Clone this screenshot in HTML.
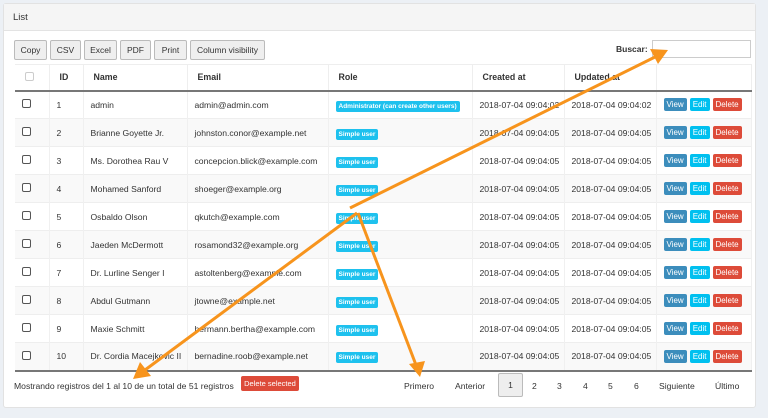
<!DOCTYPE html>
<html><head><meta charset="utf-8"><style>
*{box-sizing:border-box;margin:0;padding:0}
body{width:768px;height:418px;background:#ecf0f5;font-family:"Liberation Sans",sans-serif;font-size:8.6px;color:#333;position:relative;overflow:hidden}
.card{position:absolute;left:3px;top:3px;width:753px;height:405px;background:#fff;border-radius:3px;border:1px solid #e2e2e2}
.hd{height:27px;background:#f5f5f5;border-bottom:1px solid #e3e3e3;padding:8px 9px;font-size:9.5px}
.btn{position:absolute;top:36px;height:20px;border:1px solid #bbb;background:#efefef;font-size:8.5px;line-height:18px;text-align:center;border-radius:2px}
table{position:absolute;left:11px;top:60px;width:736px;border-collapse:collapse;table-layout:fixed}
th{height:26px;border-bottom:2px solid #777;border-right:1px solid #eee;text-align:left;padding-left:10px;font-weight:bold;font-size:8.8px;border-top:1px solid #eee}
td{height:28px;border-top:1px solid #eee;border-right:1px solid #f0f0f0;padding-left:7px;white-space:nowrap;overflow:hidden}
tr:nth-child(odd) td{background:#f9f9f9}
.cb{display:inline-block;width:9px;height:9px;border:1px solid #555;border-radius:2px;background:#fff}
.lbl{background:#1ec1ee;color:#fff;font-size:6.5px;font-weight:bold;padding:2px 3px;border-radius:2px}
.a{display:inline-block;color:#fff;font-size:8px;height:13px;line-height:13px;padding:0 3px;border-radius:2px;margin-right:3px}
.v{background:#3c8dbc}.e{background:#00c0ef}.d{background:#dd4b39}
.foot{position:absolute;top:377px;font-size:8.6px}
</style></head><body>
<div class="card"><div class="hd">List</div>
<div class="btn" style="left:10px;width:33px">Copy</div>
<div class="btn" style="left:46px;width:31px">CSV</div>
<div class="btn" style="left:80px;width:33px">Excel</div>
<div class="btn" style="left:116px;width:31px">PDF</div>
<div class="btn" style="left:150px;width:33px">Print</div>
<div class="btn" style="left:186px;width:75px">Column visibility</div>
<div style="position:absolute;left:612px;top:40px;font-weight:bold;font-size:8.5px">Buscar:</div>
<div style="position:absolute;left:648px;top:36px;width:99px;height:18px;border:1px solid #ccc"></div>
<table>
<colgroup><col style="width:34px"><col style="width:34px"><col style="width:104px"><col style="width:141px"><col style="width:144px"><col style="width:92px"><col style="width:92px"><col style="width:95px"></colgroup>
<tr><th><span class="cb" style="border-color:#ccc"></span></th><th>ID</th><th>Name</th><th>Email</th><th>Role</th><th>Created at</th><th>Updated at</th><th></th></tr>
<tr><td><span class="cb"></span></td><td>1</td><td>admin</td><td>admin@admin.com</td><td><span class="lbl">Administrator (can create other users)</span></td><td>2018-07-04 09:04:02</td><td>2018-07-04 09:04:02</td><td><span class="a v">View</span><span class="a e">Edit</span><span class="a d">Delete</span></td></tr>
<tr><td><span class="cb"></span></td><td>2</td><td>Brianne Goyette Jr.</td><td>johnston.conor@example.net</td><td><span class="lbl">Simple user</span></td><td>2018-07-04 09:04:05</td><td>2018-07-04 09:04:05</td><td><span class="a v">View</span><span class="a e">Edit</span><span class="a d">Delete</span></td></tr>
<tr><td><span class="cb"></span></td><td>3</td><td>Ms. Dorothea Rau V</td><td>concepcion.blick@example.com</td><td><span class="lbl">Simple user</span></td><td>2018-07-04 09:04:05</td><td>2018-07-04 09:04:05</td><td><span class="a v">View</span><span class="a e">Edit</span><span class="a d">Delete</span></td></tr>
<tr><td><span class="cb"></span></td><td>4</td><td>Mohamed Sanford</td><td>shoeger@example.org</td><td><span class="lbl">Simple user</span></td><td>2018-07-04 09:04:05</td><td>2018-07-04 09:04:05</td><td><span class="a v">View</span><span class="a e">Edit</span><span class="a d">Delete</span></td></tr>
<tr><td><span class="cb"></span></td><td>5</td><td>Osbaldo Olson</td><td>qkutch@example.com</td><td><span class="lbl">Simple user</span></td><td>2018-07-04 09:04:05</td><td>2018-07-04 09:04:05</td><td><span class="a v">View</span><span class="a e">Edit</span><span class="a d">Delete</span></td></tr>
<tr><td><span class="cb"></span></td><td>6</td><td>Jaeden McDermott</td><td>rosamond32@example.org</td><td><span class="lbl">Simple user</span></td><td>2018-07-04 09:04:05</td><td>2018-07-04 09:04:05</td><td><span class="a v">View</span><span class="a e">Edit</span><span class="a d">Delete</span></td></tr>
<tr><td><span class="cb"></span></td><td>7</td><td>Dr. Lurline Senger I</td><td>astoltenberg@example.com</td><td><span class="lbl">Simple user</span></td><td>2018-07-04 09:04:05</td><td>2018-07-04 09:04:05</td><td><span class="a v">View</span><span class="a e">Edit</span><span class="a d">Delete</span></td></tr>
<tr><td><span class="cb"></span></td><td>8</td><td>Abdul Gutmann</td><td>jtowne@example.net</td><td><span class="lbl">Simple user</span></td><td>2018-07-04 09:04:05</td><td>2018-07-04 09:04:05</td><td><span class="a v">View</span><span class="a e">Edit</span><span class="a d">Delete</span></td></tr>
<tr><td><span class="cb"></span></td><td>9</td><td>Maxie Schmitt</td><td>hermann.bertha@example.com</td><td><span class="lbl">Simple user</span></td><td>2018-07-04 09:04:05</td><td>2018-07-04 09:04:05</td><td><span class="a v">View</span><span class="a e">Edit</span><span class="a d">Delete</span></td></tr>
<tr><td style="border-bottom:2px solid #777"><span class="cb"></span></td><td style="border-bottom:2px solid #777">10</td><td style="border-bottom:2px solid #777">Dr. Cordia Macejkovic II</td><td style="border-bottom:2px solid #777">bernadine.roob@example.net</td><td style="border-bottom:2px solid #777"><span class="lbl">Simple user</span></td><td style="border-bottom:2px solid #777">2018-07-04 09:04:05</td><td style="border-bottom:2px solid #777">2018-07-04 09:04:05</td><td style="border-bottom:2px solid #777"><span class="a v">View</span><span class="a e">Edit</span><span class="a d">Delete</span></td></tr>
</table>
<div class="foot" style="left:10px">Mostrando registros del 1 al 10 de un total de 51 registros</div>
<div style="position:absolute;left:237px;top:372px;width:58px;height:15px;background:#dd4b39;color:#fff;font-size:7.5px;line-height:15px;text-align:center;border-radius:2px">Delete selected</div>
<div class="foot" style="left:400px">Primero</div>
<div class="foot" style="left:451px">Anterior</div>
<div style="position:absolute;left:494px;top:369px;width:25px;height:24px;border:1px solid #bbb;background:#eee;text-align:center;line-height:22px;border-radius:2px">1</div>
<div class="foot" style="left:528px">2</div><div class="foot" style="left:553px">3</div><div class="foot" style="left:579px">4</div><div class="foot" style="left:604px">5</div><div class="foot" style="left:630px">6</div>
<div class="foot" style="left:655px">Siguiente</div><div class="foot" style="left:711px">Último</div>
</div>
<svg width="768" height="418" style="position:absolute;left:0;top:0">
<g stroke="#f7941d" stroke-width="3" fill="none"><line x1="350" y1="208" x2="655" y2="57"/><line x1="357" y1="213" x2="145" y2="370"/><line x1="358" y1="213" x2="416" y2="365"/></g>
<g fill="#f7941d"><polygon points="668,50 650,49 658,64"/><polygon points="133,379 140,362 151,376"/><polygon points="420,377 409,364 425,361"/></g>
</svg>
</body></html>
